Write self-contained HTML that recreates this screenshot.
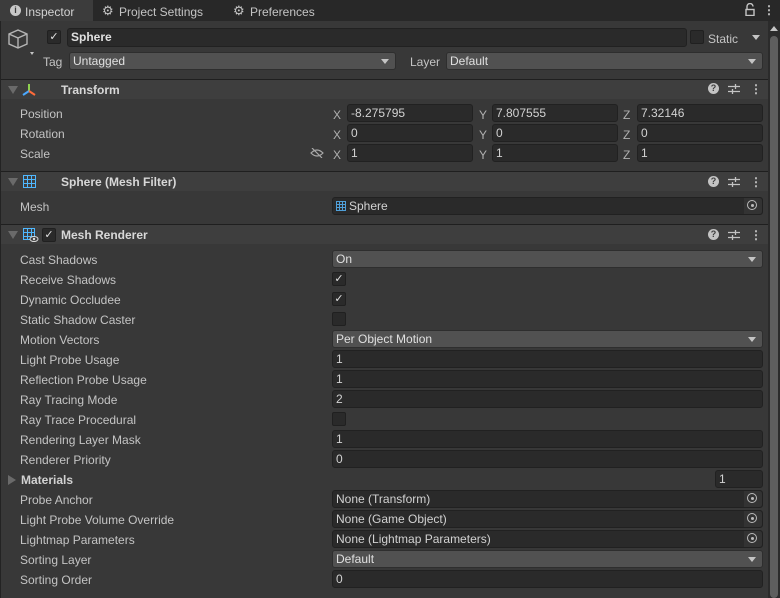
<!DOCTYPE html>
<html><head><meta charset="utf-8"><style>
*{margin:0;padding:0;box-sizing:border-box}
body{width:780px;height:598px;background:#383838;font-family:"Liberation Sans",sans-serif;font-size:12px;color:#c4c4c4;position:relative;overflow:hidden}
.a{position:absolute;white-space:nowrap}
.lab{position:absolute;left:20px;line-height:20px;height:20px;top:1px}
.f{position:absolute;height:18px;background:#2a2a2a;border:1px solid #212121;border-radius:3px;line-height:17px;padding-left:3px;color:#d2d2d2}
.dd{position:absolute;height:18px;background:#515151;border:1px solid #2e2e2e;border-radius:3px;line-height:17px;padding-left:3px;color:#e0e0e0}
.dd::after{content:"";position:absolute;right:6px;top:6px;border-left:4px solid transparent;border-right:4px solid transparent;border-top:5px solid #c4c4c4}
.cb{position:absolute;width:14px;height:14px;background:#2a2a2a;border:1px solid #202020;border-radius:2px;color:#e0e0e0;font-size:11px;line-height:12px;text-align:center}
.hdr{position:absolute;left:1px;width:767px;height:20px;background:#3e3e3e;border-top:1px solid #1f1f1f}
.hdr .t{position:absolute;left:60px;top:3px;font-weight:bold;color:#d8d8d8;font-size:12px}
.tri{position:absolute;left:7px;top:6px;border-left:5px solid transparent;border-right:5px solid transparent;border-top:8px solid #6a6a6a}
.tgt{position:absolute;right:0;top:0;width:18px;height:16px;background:#333;border-radius:0 3px 3px 0}
.tgt::after{content:"";position:absolute;left:3px;top:2px;width:8px;height:8px;border:1.5px solid #bbb;border-radius:50%}
.tgt::before{content:"";position:absolute;left:7px;top:6px;width:3px;height:3px;background:#bbb;border-radius:50%;z-index:1}
.xyz{position:absolute;color:#b0b0b0}
</style></head><body>
<div class="a" style="left:0;top:0;width:780px;height:21px;background:#282828"></div>
<div class="a" style="left:0;top:0;width:93px;height:21px;background:#3c3c3c"></div>
<div class="a" style="left:10px;top:5px;width:11px;height:11px;border-radius:50%;background:#c8c8c8;color:#3c3c3c;font-size:9px;font-weight:bold;text-align:center;line-height:11px">i</div>
<div class="a" style="left:25px;top:5px;color:#d2d2d2">Inspector</div>
<div class="a" style="left:102px;top:3px;color:#c4c4c4;font-size:13px">⚙</div>
<div class="a" style="left:119px;top:5px">Project Settings</div>
<div class="a" style="left:233px;top:3px;color:#c4c4c4;font-size:13px">⚙</div>
<div class="a" style="left:250px;top:5px">Preferences</div>
<svg class="a" style="left:745px;top:3px" width="10" height="13"><path d="M2 6V3.5a3 3 0 0 1 6 0" fill="none" stroke="#c4c4c4" stroke-width="1.4"/><rect x="1" y="6.5" width="8" height="6" fill="none" stroke="#c4c4c4" stroke-width="1.4"/></svg>
<div class="a" style="left:763px;top:3px;color:#c4c4c4;font-weight:bold">⋮</div>
<div class="a" style="left:0;top:21px;width:1px;height:577px;background:#232323"></div>
<svg class="a" style="left:7px;top:28px" width="28" height="30" viewBox="0 0 28 30"><path d="M11 2 L20 6 L20 16 L11 20 L2 16 L2 6 Z M2 6 L11 10 L20 6 M11 10 L11 20" fill="none" stroke="#b4b4b4" stroke-width="1.4"/><path d="M27 26 L31 26 L29 29Z" fill="#c4c4c4" transform="translate(-4,-2)"/></svg>
<div class="cb" style="left:47px;top:30px">✓</div>
<div class="f" style="left:67px;top:28px;width:620px;height:19px;font-weight:bold;color:#e0e0e0">Sphere</div>
<div class="cb" style="left:690px;top:30px"></div>
<div class="a" style="left:708px;top:32px">Static</div>
<div class="a" style="left:752px;top:35px;border-left:4px solid transparent;border-right:4px solid transparent;border-top:5px solid #c4c4c4"></div>
<div class="a" style="left:43px;top:55px">Tag</div>
<div class="dd" style="left:69px;top:52px;width:327px">Untagged</div>
<div class="a" style="left:410px;top:55px">Layer</div>
<div class="dd" style="left:446px;top:52px;width:317px">Default</div>
<div class="a" style="left:768px;top:21px;width:12px;height:577px;background:#2b2b2b"></div>
<div class="a" style="left:770px;top:26px;border-left:4px solid transparent;border-right:4px solid transparent;border-bottom:5px solid #c4c4c4"></div>
<div class="a" style="left:770px;top:36px;width:8px;height:562px;background:#5e5e5e;border-radius:4px"></div>
<div class="hdr" style="top:79px"><div class="tri"></div>
<svg class="a" style="left:21px;top:3px" width="14" height="14"><line x1="7" y1="8" x2="7" y2="1" stroke="#8fd14f" stroke-width="2"/><line x1="7" y1="8" x2="1" y2="12" stroke="#4aa8ff" stroke-width="2"/><line x1="7" y1="8" x2="13" y2="12" stroke="#ff6b3a" stroke-width="2"/></svg>
<div class="t">Transform</div></div>
<div class="lab" style="top:104px">Position</div>
<div class="lab" style="top:124px">Rotation</div>
<div class="lab" style="top:144px">Scale</div>
<svg class="a" style="left:310px;top:148px" width="14" height="10"><path d="M1 5Q7 -1 13 5Q7 11 1 5Z" fill="none" stroke="#aaa" stroke-width="1.2"/><line x1="2" y1="0" x2="12" y2="10" stroke="#aaa" stroke-width="1.2"/></svg>
<div class="xyz" style="left:333px;top:108px">X</div><div class="f" style="left:347px;top:104px;width:126px">-8.275795</div>
<div class="xyz" style="left:479px;top:108px">Y</div><div class="f" style="left:492px;top:104px;width:126px">7.807555</div>
<div class="xyz" style="left:623px;top:108px">Z</div><div class="f" style="left:637px;top:104px;width:126px">7.32146</div>
<div class="xyz" style="left:333px;top:128px">X</div><div class="f" style="left:347px;top:124px;width:126px">0</div>
<div class="xyz" style="left:479px;top:128px">Y</div><div class="f" style="left:492px;top:124px;width:126px">0</div>
<div class="xyz" style="left:623px;top:128px">Z</div><div class="f" style="left:637px;top:124px;width:126px">0</div>
<div class="xyz" style="left:333px;top:148px">X</div><div class="f" style="left:347px;top:144px;width:126px">1</div>
<div class="xyz" style="left:479px;top:148px">Y</div><div class="f" style="left:492px;top:144px;width:126px">1</div>
<div class="xyz" style="left:623px;top:148px">Z</div><div class="f" style="left:637px;top:144px;width:126px">1</div>
<div class="hdr" style="top:171px"><div class="tri"></div>
<svg class="a" style="left:22px;top:3px" width="13" height="13"><path d="M0.5 0.5h12v12h-12z M4.5 0.5v12 M8.5 0.5v12 M0.5 4.5h12 M0.5 8.5h12" fill="none" stroke="#4fb8ff" stroke-width="1"/></svg>
<div class="t">Sphere (Mesh Filter)</div></div>
<div class="lab" style="top:197px">Mesh</div>
<div class="f" style="left:332px;top:197px;width:431px;padding-left:16px">Sphere<svg class="a" style="left:3px;top:3px" width="10" height="10"><path d="M0.5 0.5h9v9h-9z M3.5 0.5v9 M6.5 0.5v9 M0.5 3.5h9 M0.5 6.5h9" fill="none" stroke="#4f9fd8" stroke-width="1"/></svg><span class="tgt"></span></div>
<div class="hdr" style="top:224px"><div class="tri"></div>
<svg class="a" style="left:22px;top:3px" width="16" height="15"><path d="M0.5 0.5h11v11h-11z M4.5 0.5v11 M8.5 0.5v11 M0.5 4.5h11 M0.5 8.5h11" fill="none" stroke="#4fb8ff" stroke-width="1"/><ellipse cx="11" cy="11" rx="4" ry="2.5" fill="#3e3e3e" stroke="#ddd"/><circle cx="11" cy="11" r="1.2" fill="#ddd"/></svg>
<div class="cb" style="left:41px;top:3px">✓</div>
<div class="t">Mesh Renderer</div></div>
<div class="a" style="left:708px;top:83px;width:11px;height:11px;border-radius:50%;background:#c4c4c4;color:#3e3e3e;font-size:9px;font-weight:bold;text-align:center;line-height:11px">?</div>
<div class="a" style="left:708px;top:176px;width:11px;height:11px;border-radius:50%;background:#c4c4c4;color:#3e3e3e;font-size:9px;font-weight:bold;text-align:center;line-height:11px">?</div>
<div class="a" style="left:708px;top:229px;width:11px;height:11px;border-radius:50%;background:#c4c4c4;color:#3e3e3e;font-size:9px;font-weight:bold;text-align:center;line-height:11px">?</div>
<svg class="a" style="left:728px;top:83px" width="12" height="12"><path d="M0 3.5h12M0 8.5h12M7.5 1v5M4.5 6v5" stroke="#c4c4c4" stroke-width="1.3"/></svg>
<svg class="a" style="left:728px;top:176px" width="12" height="12"><path d="M0 3.5h12M0 8.5h12M7.5 1v5M4.5 6v5" stroke="#c4c4c4" stroke-width="1.3"/></svg>
<svg class="a" style="left:728px;top:229px" width="12" height="12"><path d="M0 3.5h12M0 8.5h12M7.5 1v5M4.5 6v5" stroke="#c4c4c4" stroke-width="1.3"/></svg>
<div class="a" style="left:750px;top:82px;font-weight:bold">⋮</div>
<div class="a" style="left:750px;top:175px;font-weight:bold">⋮</div>
<div class="a" style="left:750px;top:228px;font-weight:bold">⋮</div>
<div class="lab" style="top:250px">Cast Shadows</div><div class="dd" style="left:332px;top:250px;width:431px">On</div>
<div class="lab" style="top:270px">Receive Shadows</div><div class="cb" style="left:332px;top:272px">✓</div>
<div class="lab" style="top:290px">Dynamic Occludee</div><div class="cb" style="left:332px;top:292px">✓</div>
<div class="lab" style="top:310px">Static Shadow Caster</div><div class="cb" style="left:332px;top:312px"></div>
<div class="lab" style="top:330px">Motion Vectors</div><div class="dd" style="left:332px;top:330px;width:431px">Per Object Motion</div>
<div class="lab" style="top:350px">Light Probe Usage</div><div class="f" style="left:332px;top:350px;width:431px">1</div>
<div class="lab" style="top:370px">Reflection Probe Usage</div><div class="f" style="left:332px;top:370px;width:431px">1</div>
<div class="lab" style="top:390px">Ray Tracing Mode</div><div class="f" style="left:332px;top:390px;width:431px">2</div>
<div class="lab" style="top:410px">Ray Trace Procedural</div><div class="cb" style="left:332px;top:412px"></div>
<div class="lab" style="top:430px">Rendering Layer Mask</div><div class="f" style="left:332px;top:430px;width:431px">1</div>
<div class="lab" style="top:450px">Renderer Priority</div><div class="f" style="left:332px;top:450px;width:431px">0</div>
<div class="a" style="left:8px;top:475px;border-top:5px solid transparent;border-bottom:5px solid transparent;border-left:8px solid #6a6a6a"></div>
<div class="lab" style="top:470px;font-weight:bold;left:21px;color:#d2d2d2">Materials</div><div class="f" style="left:715px;top:470px;width:48px">1</div>
<div class="lab" style="top:490px">Probe Anchor</div><div class="f" style="left:332px;top:490px;width:431px">None (Transform)<span class="tgt"></span></div>
<div class="lab" style="top:510px">Light Probe Volume Override</div><div class="f" style="left:332px;top:510px;width:431px">None (Game Object)<span class="tgt"></span></div>
<div class="lab" style="top:530px">Lightmap Parameters</div><div class="f" style="left:332px;top:530px;width:431px">None (Lightmap Parameters)<span class="tgt"></span></div>
<div class="lab" style="top:550px">Sorting Layer</div><div class="dd" style="left:332px;top:550px;width:431px">Default</div>
<div class="lab" style="top:570px">Sorting Order</div><div class="f" style="left:332px;top:570px;width:431px">0</div>
</body></html>
